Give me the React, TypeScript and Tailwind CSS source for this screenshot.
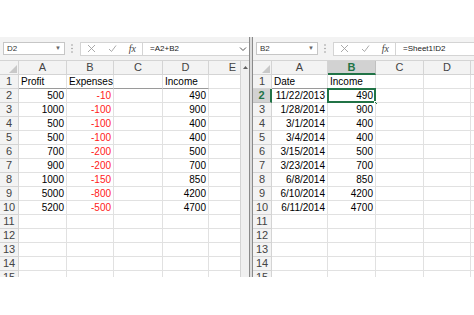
const GRID = '#e1e1e1'
const HEAD = '#d4d4d4'

type Cell = { v: string; num?: boolean; red?: boolean }

const leftData: Cell[][] = [
  [{ v: 'Profit' }, { v: 'Expenses' }, { v: '' }, { v: 'Income' }],
  ...[
    ['500', '-10', '490'],
    ['1000', '-100', '900'],
    ['500', '-100', '400'],
    ['500', '-100', '400'],
    ['700', '-200', '500'],
    ['900', '-200', '700'],
    ['1000', '-150', '850'],
    ['5000', '-800', '4200'],
    ['5200', '-500', '4700'],
  ].map(([a, b, d]) => [
    { v: a, num: true },
    { v: b, num: true, red: true },
    { v: '' },
    { v: d, num: true },
  ]),
]

const rightData: Cell[][] = [
  [{ v: 'Date' }, { v: 'Income' }],
  ...[
    ['11/22/2013', '490'],
    ['1/28/2014', '900'],
    ['3/1/2014', '400'],
    ['3/4/2014', '400'],
    ['3/15/2014', '500'],
    ['3/23/2014', '700'],
    ['6/8/2014', '850'],
    ['6/10/2014', '4200'],
    ['6/11/2014', '4700'],
  ].map(([a, b]) => [
    { v: a, num: true },
    { v: b, num: true },
  ]),
]

function FormulaBar({ name, formula, chevron }: { name: string; formula: string; chevron?: boolean }) {
  return (
    <div className="h-[24px] bg-[#f3f3f3] flex items-center border-b border-[#d4d4d4] font-['Liberation_Sans',sans-serif]">
      <div className="ml-[3px] w-[62px] h-[13px] bg-white border border-[#c6c6c6] flex items-center justify-between px-[3px] text-[8px] text-[#333]">
        <span>{name}</span>
        <span className="text-[6px] text-[#666]">▼</span>
      </div>
      <svg width="14" height="13" viewBox="0 0 14 13" className="shrink-0">
        <circle cx="7" cy="3" r="0.8" fill="#999" />
        <circle cx="7" cy="6.5" r="0.8" fill="#999" />
        <circle cx="7" cy="10" r="0.8" fill="#999" />
      </svg>
      <div className="ml-[1px] flex-1 h-[14px] bg-white border border-[#d4d4d4] border-r-0 flex items-center">
        <div className="w-[62px] h-full flex items-center justify-around border-r border-[#d4d4d4]">
          <svg width="9" height="9" viewBox="0 0 9 9">
            <path d="M1 1 L8 8 M8 1 L1 8" stroke="#a0a0a0" strokeWidth="0.9" fill="none" />
          </svg>
          <svg width="9" height="9" viewBox="0 0 9 9">
            <path d="M1 5 L3.5 7.5 L8 1.5" stroke="#a0a0a0" strokeWidth="0.9" fill="none" />
          </svg>
          <span className="font-['Liberation_Serif',serif] italic text-[10px] text-[#444] leading-none">fx</span>
        </div>
        <span className="ml-[7px] text-[8px] text-[#222] flex-1">{formula}</span>
        {chevron && (
          <svg width="8" height="6" viewBox="0 0 8 6" className="mr-[2px]">
            <path d="M1 1.5 L4 4.5 L7 1.5" stroke="#555" strokeWidth="1" fill="none" />
          </svg>
        )}
      </div>
    </div>
  )
}

function Sheet({
  cols,
  data,
  gridWidth,
  boldUnderRow1,
  selCol,
  selRow,
}: {
  cols: number[]
  data: Cell[][]
  gridWidth: number
  boldUnderRow1: number
  selCol?: number
  selRow?: number
}) {
  const letters = ['A', 'B', 'C', 'D', 'E']
  const rows = Array.from({ length: 15 }, (_, i) => i + 1)
  return (
    <div className="overflow-hidden h-[216px] font-['Liberation_Sans',sans-serif]" style={{ width: gridWidth }}>
      <div className="flex h-[14px]">
        <div className="w-[19px] shrink-0 bg-[#f3f3f3] border-r border-b border-[#d4d4d4] relative">
          <svg width="8" height="8" viewBox="0 0 8 8" className="absolute right-[1px] bottom-[1px]">
            <path d="M8 0 L8 8 L0 8 Z" fill="#c8c8c8" />
          </svg>
        </div>
        {cols.map((w, c) => {
          const sel = c === selCol
          return (
            <div
              key={c}
              className={
                sel
                  ? 'shrink-0 bg-[#d2d2d2] border-r border-[#c0c0c0] border-b-2 border-b-[#217346] text-[#217346] font-bold text-[11px] leading-[12px] text-center'
                  : 'shrink-0 bg-[#f3f3f3] border-r border-b border-[#d4d4d4] text-[#444] text-[11px] leading-[13px] text-center'
              }
              style={{ width: w }}
            >
              {letters[c]}
            </div>
          )
        })}
      </div>
      {rows.map((r) => {
        const rowSel = r === selRow
        return (
          <div key={r} className="flex h-[14px]">
            <div
              className={
                rowSel
                  ? 'w-[19px] shrink-0 bg-[#d2d2d2] border-r-2 border-r-[#217346] border-b border-[#c0c0c0] text-[#217346] font-bold text-[11px] leading-[13px] text-center'
                  : 'w-[19px] shrink-0 bg-[#f3f3f3] border-r border-b border-[#d4d4d4] text-[#444] text-[11px] leading-[13px] text-center'
              }
            >
              {r}
            </div>
            {cols.map((w, c) => {
              const cell = data[r - 1]?.[c]
              const dark = r === 1 && c < boldUnderRow1
              const isSel = rowSel && c === selCol
              return (
                <div
                  key={c}
                  className={
                    'shrink-0 relative border-r border-b text-[10px] leading-[13px] whitespace-nowrap px-[2px] ' +
                    (dark ? 'border-b-[#9a9a9a] ' : '') +
                    (cell?.num ? 'text-right ' : 'text-left ') +
                    (cell?.red ? 'text-[#ff1a1a]' : 'text-black')
                  }
                  style={{ width: w, borderRightColor: GRID, borderBottomColor: dark ? '#9a9a9a' : GRID }}
                >
                  {cell?.v}
                  {isSel && (
                    <>
                      <div className="absolute left-[-1px] top-[-1px] right-[-1px] bottom-[-1px] border-2 border-[#217346]" />
                      <div className="absolute right-[-3px] bottom-[-3px] w-[4px] h-[4px] bg-[#217346] border border-white" />
                    </>
                  )}
                </div>
              )
            })}
          </div>
        )
      })}
    </div>
  )
}

export default function App() {
  return (
    <div className="w-[474px] h-[315px] bg-white overflow-hidden pt-[37px]">
      <div className="flex h-[240px]">
        <div className="w-[249px] shrink-0">
          <FormulaBar name="D2" formula="=A2+B2" chevron />
          <div className="flex">
            <Sheet cols={[48, 47, 49, 46, 48]} data={leftData} gridWidth={240} boldUnderRow1={4} />
            <div className="w-[9px] h-[216px] bg-[#f0f0f0] border-l border-[#d4d4d4] flex flex-col items-center">
              <svg width="7" height="7" viewBox="0 0 7 7" className="mt-[3px]">
                <path d="M1 5 L3.5 2 L6 5 Z" fill="#606060" />
              </svg>
            </div>
          </div>
        </div>
        <div className="w-[4px] shrink-0 bg-[#dcdcdc] border-l border-r border-[#8a8a8a]" />
        <div className="flex-1">
          <FormulaBar name="B2" formula="=Sheet1!D2" />
          <Sheet cols={[56, 48, 48, 47, 48]} data={rightData} gridWidth={221} boldUnderRow1={2} selCol={1} selRow={2} />
        </div>
      </div>
    </div>
  )
}
